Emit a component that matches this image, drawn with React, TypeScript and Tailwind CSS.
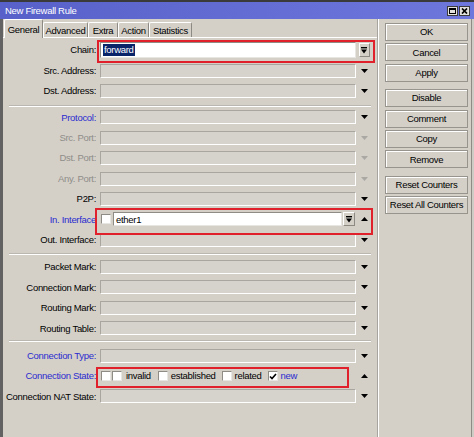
import React from "react";

type Tone = "black" | "blue" | "gray";

const toneClass: Record<Tone, string> = {
  black: "text-black",
  blue: "text-[#2b2bcf]",
  gray: "text-[#8f8d89]",
};

const ArrowDown = ({ dim = false }: { dim?: boolean }) => (
  <svg width="7" height="4" viewBox="0 0 7 4" className={dim ? "fill-[#aaa8a3]" : "fill-black"}>
    <polygon points="0,0 7,0 3.5,4" />
  </svg>
);

const ArrowUp = () => (
  <svg width="7" height="4" viewBox="0 0 7 4" className="fill-black">
    <polygon points="0,4 7,4 3.5,0" />
  </svg>
);

// combo button: bar + down triangle
const ComboButton = ({ w }: { w: string }) => (
  <div className={`${w} h-[14px] flex items-center justify-center border border-white border-r-[#8d8a84] border-b-[#8d8a84] bg-[#d4d0c8]`}>
    <svg width="6" height="7" viewBox="0 0 6 7" className="fill-black">
      <rect x="0" y="0" width="6" height="1.4" />
      <polygon points="0,2.5 6,2.5 3,6.5" />
    </svg>
  </div>
);

const Field = () => (
  <div className="h-[14px] w-[256px] border border-[#a9a6a0] border-r-white border-b-white bg-[#d6d3cd]" />
);

const Checkbox = ({ checked = false, className = "" }: { checked?: boolean; className?: string }) => (
  <div className={`w-[10px] h-[10px] shrink-0 bg-white border border-[#8f8c86] border-r-[#e8e6e2] border-b-[#e8e6e2] flex items-center justify-center ${className}`}>
    {checked && (
      <svg width="8" height="7" viewBox="0 0 8 7">
        <path d="M1 3.5 L3 5.5 L7 1" stroke="black" strokeWidth="1.6" fill="none" />
      </svg>
    )}
  </div>
);

type RowProps = {
  label: string;
  tone?: Tone;
  children?: React.ReactNode;
  arrow?: React.ReactNode;
};

const Row = ({ label, tone = "black", children, arrow }: RowProps) => (
  <div className="flex h-[20.4px] items-center">
    <div className={`w-[93px] shrink-0 text-right whitespace-nowrap ${toneClass[tone]}`}>{label}</div>
    <div className="ml-[4px] w-[256px] shrink-0 flex items-center">{children ?? <Field />}</div>
    <div className="ml-[1px] w-[14px] shrink-0 flex items-center justify-center">{arrow}</div>
  </div>
);

const Separator = ({ className }: { className: string }) => (
  <div className={`ml-[6px] w-[362px] h-[2px] border-t border-[#bab7b0] border-b border-b-white ${className}`} />
);

const Button = ({ label, className = "" }: { label: string; className?: string }) => (
  <div
    className={`h-[18px] w-[83px] flex items-center justify-center whitespace-nowrap border border-[#97948d] shadow-[inset_1px_1px_0_#ffffff] bg-[#d4d0c8] text-black ${className}`}
  >
    {label}
  </div>
);

const tabs = ["General", "Advanced", "Extra", "Action", "Statistics"];
const tabWidths = ["w-[39px]", "w-[45px]", "w-[30px]", "w-[31px]", "w-[43px]"];

export default function App() {
  return (
    <div className="relative w-[474px] h-[437px] overflow-hidden bg-[#d4d0c8] flex flex-col font-['Liberation_Sans',Arial,sans-serif] text-[9.5px] tracking-[-0.3px] leading-none">
      {/* title bar */}
      <div className="h-[19px] shrink-0 border-t-2 border-[#3a3a3a] bg-linear-to-r from-[#5761c9] to-[#6d77dc] flex items-center pl-[5px] pr-[4px] text-white">
        <span className="flex-1">New Firewall Rule</span>
        <div className="flex gap-[1px]">
          <div className="w-[11px] h-[10px] bg-[#e4e2de] border border-[#3c3c3c] flex items-center justify-center">
            <div className="w-[7px] h-[6px] border border-black border-t-2" />
          </div>
          <div className="w-[11px] h-[10px] bg-[#e4e2de] border border-[#3c3c3c] flex items-center justify-center">
            <svg width="7" height="6" viewBox="0 0 7 6">
              <path d="M1 0.5 L6 5.5 M6 0.5 L1 5.5" stroke="black" strokeWidth="1.7" />
            </svg>
          </div>
        </div>
      </div>

      <div className="flex flex-1 border-l-[3px] border-[#626262]">
        {/* left panel */}
        <div className="w-[374px] shrink-0 flex flex-col">
          <div className="h-[19px] flex items-end pl-[1px] border-b border-white">
            {tabs.map((t, i) =>
              i === 0 ? (
                <div
                  key={t}
                  className={`${tabWidths[i]} h-[19px] -mb-px bg-[#d4d0c8] border-l border-t border-white border-r border-r-[#8d8a84] rounded-t-[2px] flex items-center justify-center pt-[1px]`}
                >
                  {t}
                </div>
              ) : (
                <div
                  key={t}
                  className={`${tabWidths[i]} h-[15px] border-l border-t border-white border-r border-r-[#8d8a84] rounded-t-[2px] flex items-center justify-center pt-[1px]`}
                >
                  {t}
                </div>
              )
            )}
          </div>

          <div className="pt-[2px] flex flex-col">
            <Row label="Chain:" arrow={<ComboButton w="w-[11px]" />}>
              <div className="h-[16px] w-[256px] bg-white border border-[#8f8c86] border-r-[#e8e6e2] border-b-[#e8e6e2] flex items-center pl-[2px]">
                <span className="bg-[#0a246a] text-white px-[1px] py-[1px]">forward</span>
              </div>
            </Row>
            <Row label="Src. Address:" arrow={<ArrowDown />} />
            <Row label="Dst. Address:" arrow={<ArrowDown />} />

            <Separator className="mt-[4px]" />

            <Row label="Protocol:" tone="blue" arrow={<ArrowDown />} />
            <Row label="Src. Port:" tone="gray" arrow={<ArrowDown dim />} />
            <Row label="Dst. Port:" tone="gray" arrow={<ArrowDown dim />} />
            <Row label="Any. Port:" tone="gray" arrow={<ArrowDown dim />} />
            <Row label="P2P:" arrow={<ArrowDown />} />
            <Row label="In. Interface" tone="blue" arrow={<ArrowUp />}>
              <Checkbox className="ml-[1px]" />
              <div className="ml-[2px] h-[14px] w-[229px] bg-white border border-[#8f8c86] border-r-[#e8e6e2] border-b-[#e8e6e2] flex items-center pl-[2px]">
                ether1
              </div>
              <div className="ml-[1px]">
                <ComboButton w="w-[12px]" />
              </div>
            </Row>
            <Row label="Out. Interface:" arrow={<ArrowDown />} />

            <Separator className="mt-[3px] mb-[2px]" />

            <Row label="Packet Mark:" arrow={<ArrowDown />} />
            <Row label="Connection Mark:" arrow={<ArrowDown />} />
            <Row label="Routing Mark:" arrow={<ArrowDown />} />
            <Row label="Routing Table:" arrow={<ArrowDown />} />

            <Separator className="mt-[2px] mb-[3px]" />

            <Row label="Connection Type:" tone="blue" arrow={<ArrowDown />} />
            <Row label="Connection State:" tone="blue" arrow={<ArrowUp />}>
              <Checkbox className="ml-[1px]" />
              <Checkbox className="ml-[1px]" />
              <span className="ml-[4px]">invalid</span>
              <Checkbox className="ml-[7px]" />
              <span className="ml-[3px]">established</span>
              <Checkbox className="ml-[6px]" />
              <span className="ml-[3px]">related</span>
              <Checkbox checked className="ml-[6px]" />
              <span className="ml-[3px] text-[#2b2bcf]">new</span>
            </Row>
            <Row label="Connection NAT State:" arrow={<ArrowDown />} />
          </div>
        </div>

        {/* divider */}
        <div className="w-[2px] shrink-0 border-l border-[#a7a49e] border-r border-r-white" />

        {/* right button panel */}
        <div className="w-[92px] shrink-0 pl-[6px] pt-[4px] flex flex-col gap-[2.4px]">
          <Button label="OK" />
          <Button label="Cancel" />
          <Button label="Apply" />
          <Button label="Disable" className="mt-[5px]" />
          <Button label="Comment" />
          <Button label="Copy" />
          <Button label="Remove" />
          <Button label="Reset Counters" className="mt-[5px]" />
          <Button label="Reset All Counters" />
        </div>

        <div className="flex-1 border-l border-[#8f8c86] bg-[#cfccc5]" />
      </div>

      {/* red annotation boxes */}
      <div className="absolute left-[97px] top-[40px] w-[278px] h-[23px] border-2 border-[#e0202a] pointer-events-none" />
      <div className="absolute left-[95px] top-[208px] w-[278px] h-[27px] border-2 border-[#e0202a] pointer-events-none" />
      <div className="absolute left-[96px] top-[367px] w-[253px] h-[21px] border-2 border-[#e0202a] pointer-events-none" />
    </div>
  );
}
